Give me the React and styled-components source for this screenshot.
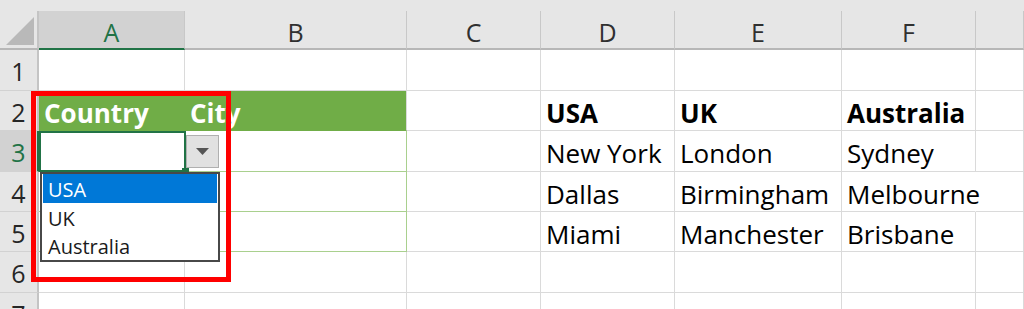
import React from "react";
import styled, { createGlobalStyle } from "styled-components";

const Global = createGlobalStyle`
  html, body { margin: 0; padding: 0; background: #ffffff; overflow: hidden; }
  * { box-sizing: border-box; }
`;

const COLS = [
  { key: "A", w: 146 },
  { key: "B", w: 222 },
  { key: "C", w: 134 },
  { key: "D", w: 134 },
  { key: "E", w: 167 },
  { key: "F", w: 134 },
  { key: "G", w: null },
];
const ROW_H = [41, 40, 41, 40, 40, 41, 40];

const GRID = "#dadada";
const TABLE_LINE = "#a9d08e";
const EXCEL_GREEN = "#217346";

const Sheet = styled.div`
  position: relative;
  width: 1024px;
  height: 309px;
  overflow: hidden;
  display: grid;
  grid-template-columns: 39px ${COLS.filter((c) => c.w).map((c) => c.w + "px").join(" ")} 1fr;
  grid-template-rows: 11px 39px ${ROW_H.map((h) => h + "px").join(" ")};
  font-family: "Open Sans", "Noto Sans", sans-serif;
  background: #ffffff;
`;

const TopStrip = styled.div`
  grid-column: 1 / -1;
  background: #e6e6e6;
`;

const Corner = styled.div`
  background: #e6e6e6;
  border-right: 2px solid #c4c4c4;
  border-bottom: 2px solid #b7b7b7;
  display: flex;
  align-items: flex-end;
  justify-content: flex-end;
  padding: 0 3px 3px 0;
`;

const ColHeader = styled.div`
  background: ${(p) => (p.$selected ? "#d2d2d2" : "#e6e6e6")};
  color: ${(p) => (p.$selected ? EXCEL_GREEN : "#303030")};
  border-right: 1px solid #c8c8c8;
  border-bottom: 2px solid ${(p) => (p.$selected ? EXCEL_GREEN : "#b7b7b7")};
  display: flex;
  align-items: center;
  justify-content: center;
  font-size: 25px;
  padding-top: 6px;
  line-height: 1;
`;

const RowHeader = styled.div`
  background: ${(p) => (p.$selected ? "#d2d2d2" : "#e6e6e6")};
  color: ${(p) => (p.$selected ? EXCEL_GREEN : "#262626")};
  border-right: 2px solid ${(p) => (p.$selected ? EXCEL_GREEN : "#c4c4c4")};
  border-bottom: 1px solid #d2d2d2;
  display: flex;
  align-items: center;
  justify-content: center;
  font-size: 25px;
  padding-top: 3px;
  line-height: 1;
`;

const Cell = styled.div`
  background: ${(p) => p.$fill || "#ffffff"};
  color: ${(p) => p.$color || "#000000"};
  font-weight: ${(p) => (p.$bold ? 700 : 400)};
  border-right: 1px solid ${(p) => p.$right || GRID};
  border-bottom: 1px solid ${(p) => p.$bottom || GRID};
  display: flex;
  align-items: center;
  padding: 4px 0 0 5px;
  font-size: 26px;
  line-height: 1;
  white-space: nowrap;
  overflow: visible;
  position: relative;
  z-index: ${(p) => (p.$overflow ? 1 : 0)};
`;

const ActiveCell = styled.div`
  position: absolute;
  left: 39px;
  top: 131px;
  width: 147px;
  height: 41px;
  border: 2px solid ${EXCEL_GREEN};
  z-index: 3;
`;

const FillHandle = styled.div`
  position: absolute;
  right: -5px;
  bottom: -4px;
  width: 7px;
  height: 6px;
  background: ${EXCEL_GREEN};
`;

const DropButton = styled.div`
  position: absolute;
  left: 186px;
  top: 135px;
  width: 33px;
  height: 33px;
  background: #e1e1e1;
  border: 1px solid #b0b0b0;
  display: flex;
  align-items: center;
  justify-content: center;
  z-index: 4;
`;

const DropList = styled.div`
  position: absolute;
  left: 40px;
  top: 172px;
  width: 180px;
  height: 90px;
  background: #ffffff;
  border: 2px solid #484848;
  padding: 0 1px;
  display: flex;
  flex-direction: column;
  z-index: 4;
  font-family: "Open Sans", "Noto Sans", sans-serif;
`;

const ListItem = styled.div`
  height: 28.5px;
  display: flex;
  align-items: center;
  padding: 3px 0 0 5px;
  font-size: 20px;
  background: ${(p) => (p.$active ? "#0078d7" : "transparent")};
  color: ${(p) => (p.$active ? "#ffffff" : "#1a1a1a")};
`;

const Highlight = styled.div`
  position: absolute;
  left: 31px;
  top: 91px;
  width: 200px;
  height: 191px;
  border: 5px solid #ff0000;
  z-index: 5;
  pointer-events: none;
`;

const GREEN_FILL = "#70ad47";

const data = {
  2: {
    A: { text: "Country", fill: GREEN_FILL, color: "#ffffff", bold: true, right: GREEN_FILL, bottom: GREEN_FILL },
    B: { text: "City", fill: GREEN_FILL, color: "#ffffff", bold: true, bottom: GREEN_FILL },
    D: { text: "USA", bold: true },
    E: { text: "UK", bold: true },
    F: { text: "Australia", bold: true },
  },
  3: {
    A: { bottom: TABLE_LINE },
    B: { bottom: TABLE_LINE, right: TABLE_LINE },
    D: { text: "New York" },
    E: { text: "London" },
    F: { text: "Sydney" },
  },
  4: {
    A: { bottom: TABLE_LINE },
    B: { bottom: TABLE_LINE, right: TABLE_LINE },
    D: { text: "Dallas" },
    E: { text: "Birmingham" },
    F: { text: "Melbourne", right: "#ffffff", overflow: true },
  },
  5: {
    A: { bottom: TABLE_LINE },
    B: { bottom: TABLE_LINE, right: TABLE_LINE },
    D: { text: "Miami" },
    E: { text: "Manchester" },
    F: { text: "Brisbane" },
  },
};

export default function App() {
  return (
    <>
      <Global />
      <Sheet>
        <TopStrip />
        <Corner>
          <svg width="28" height="28" viewBox="0 0 28 28">
            <polygon points="0,28 28,28 28,0" fill="#b9b9b9" />
          </svg>
        </Corner>
        {COLS.map((c) => (
          <ColHeader key={c.key} $selected={c.key === "A"}>
            {c.key === "G" ? "" : c.key}
          </ColHeader>
        ))}
        {ROW_H.map((_, i) => {
          const r = i + 1;
          return (
            <React.Fragment key={r}>
              <RowHeader $selected={r === 3}>{r}</RowHeader>
              {COLS.map((c) => {
                const d = (data[r] && data[r][c.key]) || {};
                return (
                  <Cell
                    key={c.key}
                    $fill={d.fill}
                    $color={d.color}
                    $bold={d.bold}
                    $right={d.right}
                    $bottom={d.bottom}
                    $overflow={d.overflow}
                  >
                    {d.text || ""}
                  </Cell>
                );
              })}
            </React.Fragment>
          );
        })}
        <ActiveCell>
          <FillHandle />
        </ActiveCell>
        <DropButton>
          <svg width="13" height="7" viewBox="0 0 13 7">
            <polygon points="0,0 13,0 6.5,7" fill="#555555" />
          </svg>
        </DropButton>
        <DropList>
          <ListItem $active>USA</ListItem>
          <ListItem>UK</ListItem>
          <ListItem>Australia</ListItem>
        </DropList>
        <Highlight />
      </Sheet>
    </>
  );
}
